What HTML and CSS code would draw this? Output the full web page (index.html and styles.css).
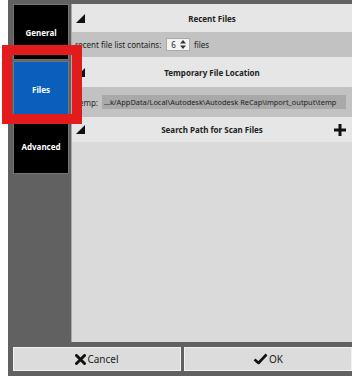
FILE: index.html
```html
<!DOCTYPE html>
<html>
<head>
  <title>Options</title>
  <link rel="stylesheet" href="styles.css">
</head>
<body>
  <div id="window">
    <div id="main">
      <div id="sidebar">
        <div class="tab">General</div>
        <div class="tab active">Files</div>
        <div class="tab">Advanced</div>
      </div>

      <div id="panel">
        <div class="section-head head-recent">
          <svg class="arrow" width="9" height="9" viewBox="0 0 9 9"><polygon points="9,0 9,9 0,9" fill="#111"/></svg>
          <span class="head-title">Recent Files</span>
        </div>
        <div class="section-row row-recent">
          <span>recent file list contains:</span>
          <span class="spin">6
            <svg width="6" height="9" viewBox="0 0 6 9"><polygon points="3,0 6,3.5 0,3.5" fill="#333"/><polygon points="0,5.5 6,5.5 3,9" fill="#333"/></svg>
          </span>
          <span>files</span>
        </div>

        <div class="section-head head-temp">
          <svg class="arrow" width="9" height="9" viewBox="0 0 9 9"><polygon points="9,0 9,9 0,9" fill="#111"/></svg>
          <span class="head-title">Temporary File Location</span>
        </div>
        <div class="section-row row-temp">
          <span>Temp:</span>
          <span class="path">...k/AppData/Local\Autodesk\Autodesk ReCap\import_output\temp</span>
        </div>

        <div class="section-head head-search">
          <svg class="arrow" width="9" height="9" viewBox="0 0 9 9"><polygon points="9,0 9,9 0,9" fill="#111"/></svg>
          <span class="head-title">Search Path for Scan Files</span>
          <svg class="add" width="12" height="12" viewBox="0 0 12 12"><rect x="4.5" y="0" width="3" height="12" fill="#111"/><rect x="0" y="4.5" width="12" height="3" fill="#111"/></svg>
        </div>
      </div>
    </div>

    <div id="footer">
      <button class="btn">
        <svg width="11" height="11" viewBox="0 0 11 11"><path d="M1.5 1.5 L9.5 9.5 M9.5 1.5 L1.5 9.5" stroke="#111" stroke-width="3" stroke-linecap="round"/></svg>
        Cancel
      </button>
      <button class="btn">
        <svg width="15" height="12" viewBox="0 0 15 12"><path d="M1.5 6.5 L5.5 10 L13.5 1.5" stroke="#111" stroke-width="2.6" fill="none" stroke-linejoin="round"/></svg>
        OK
      </button>
    </div>
  </div>

  <div id="highlight"></div>
</body>
</html>
```

FILE: styles.css
```css
body {
  margin: 0;
  background: #ffffff;
  font-family: "Noto Sans", "Open Sans", sans-serif;
  color: #222;
}

#window {
  margin-left: 8px;
  width: 344px;
  height: 376px;
  background: #616161;
  display: flex;
  flex-direction: column;
}

#main {
  display: flex;
  padding-top: 4px;
  height: 338px;
}

#sidebar {
  width: 63px;
  flex-shrink: 0;
  padding-left: 5px;
  box-sizing: border-box;
  display: flex;
  flex-direction: column;
  gap: 1px;
}

.tab {
  width: 56px;
  height: 56px;
  box-sizing: border-box;
  border: 1px solid #747474;
  background: #000;
  color: #fff;
  font-size: 8px;
  font-weight: bold;
  display: flex;
  align-items: center;
  justify-content: center;
}

.tab.active {
  background: #0a5fbd;
}

#panel {
  flex: 1;
  min-width: 0;
  background: #dadada;
  border-left: 1px solid #a8a8a8;
  display: flex;
  flex-direction: column;
}

.section-head {
  display: grid;
  grid-template-columns: 20px 1fr 20px;
  align-items: center;
  background: #e6e6e6;
  font-size: 8px;
  font-weight: bold;
}

.section-head .arrow {
  margin-left: 4px;
}

.head-title {
  text-align: center;
}

.head-recent {
  height: 28px;
}

.head-temp {
  height: 30px;
}

.head-search {
  height: 25px;
}

.add {
  justify-self: end;
  margin-right: 6px;
}

.section-row {
  display: flex;
  align-items: center;
  gap: 4px;
  background: #c2c2c2;
  font-size: 8px;
  padding-left: 3px;
}

.row-recent {
  height: 25px;
}

.row-temp {
  height: 30px;
}

.spin {
  display: flex;
  align-items: center;
  gap: 4px;
  background: #f4f4f4;
  border: 1px solid #aaa;
  height: 11px;
  padding: 0 3px 0 4px;
  margin-left: 1px;
}

.path {
  flex: 1;
  min-width: 0;
  background: #a9a9a9;
  margin-right: 6px;
  height: 14px;
  line-height: 14px;
  padding-left: 2px;
  font-size: 7.4px;
  white-space: nowrap;
  overflow: hidden;
}

#footer {
  display: flex;
  gap: 3px;
  padding: 5px 0 5px 5px;
}

.btn {
  flex: 1;
  height: 24px;
  background: #dcdcdc;
  border: 1px solid #f2f2f2;
  font-family: "Noto Sans", "Open Sans", sans-serif;
  font-size: 10px;
  color: #222;
  display: flex;
  align-items: center;
  justify-content: center;
  gap: 1px;
  padding: 0;
}

#highlight {
  position: absolute;
  left: 2px;
  top: 45px;
  width: 80px;
  height: 79px;
  box-sizing: border-box;
  border: 10px solid #e21c1c;
}
```
